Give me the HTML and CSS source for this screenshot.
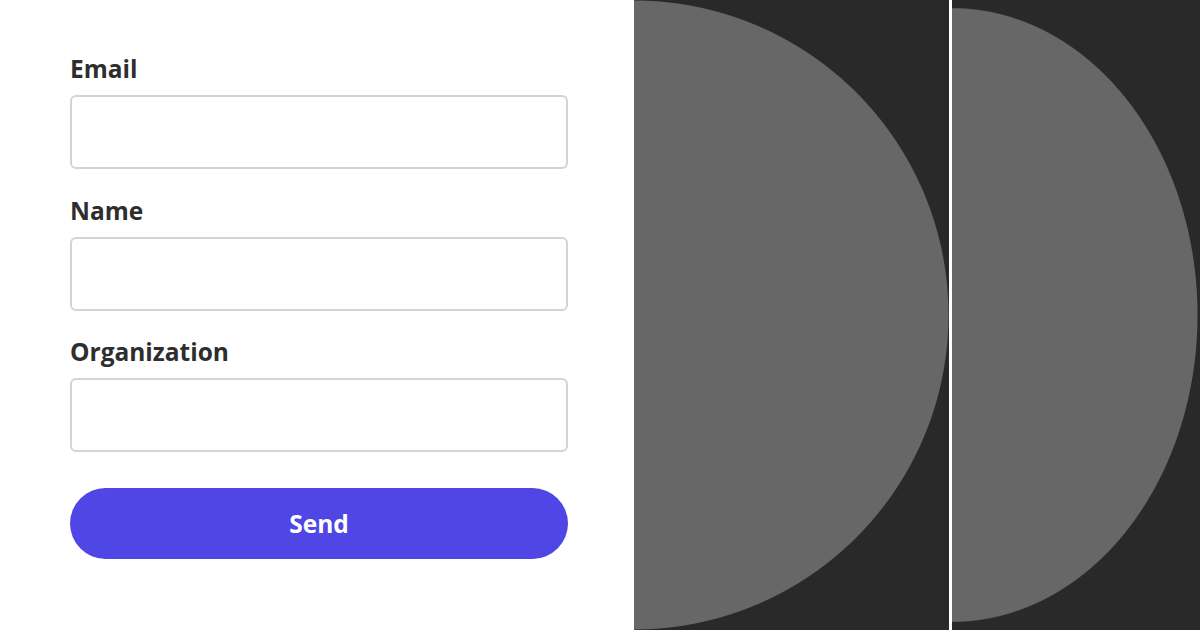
FILE: index.html
```html
<!DOCTYPE html>
<html lang="en">
<head>
<meta charset="utf-8">
<title>Contact form</title>
<link rel="stylesheet" href="styles.css">
</head>
<body>
<div class="page">
  <section class="form-side">
    <form class="form">
      <div class="field">
        <label class="label" for="email">Email</label>
        <input class="input" id="email" type="email">
      </div>
      <div class="field">
        <label class="label" for="name">Name</label>
        <input class="input" id="name" type="text">
      </div>
      <div class="field">
        <label class="label" for="org">Organization</label>
        <input class="input" id="org" type="text">
      </div>
      <button class="send" type="button">Send</button>
    </form>
  </section>
  <section class="art">
    <div class="panel panel-one"></div>
    <div class="panel panel-two"></div>
  </section>
</div>
</body>
</html>
```

FILE: styles.css
```css
* { box-sizing: border-box; }
html, body { margin: 0; padding: 0; }
body {
  width: 1200px;
  height: 630px;
  overflow: hidden;
  background: #ffffff;
  font-family: "Open Sans", "Noto Sans", "Liberation Sans", sans-serif;
}
.page {
  display: flex;
  width: 1200px;
  height: 630px;
}
.form-side {
  width: 634px;
  flex: none;
  padding: 53px 66px 0 70px;
}
.form {
  display: flex;
  flex-direction: column;
  gap: 25.5px;
  width: 498px;
}
.field {
  display: flex;
  flex-direction: column;
  gap: 10px;
}
.label {
  font-size: 24.5px;
  line-height: 32px;
  font-weight: 700;
  color: #2e2e2e;
}
.input {
  display: block;
  width: 498px;
  height: 74px;
  margin: 0;
  border: 2px solid #d4d4d4;
  border-radius: 6px;
  background: #ffffff;
  font: inherit;
}
.send {
  margin-top: 10px;
  width: 498px;
  height: 71px;
  border: none;
  border-radius: 36px;
  background: #4f46e5;
  color: #ffffff;
  font-family: inherit;
  font-size: 24.5px;
  font-weight: 700;
}
.art {
  flex: 1;
  display: flex;
  gap: 3px;
  background: #ffffff;
}
.panel {
  height: 630px;
  background-color: #292929;
}
.panel-one {
  width: 315px;
  flex: none;
  background-image: radial-gradient(315px 315px at 0 50%, #676767 calc(100% - 1px), #292929 100%);
}
.panel-two {
  flex: 1;
  background-image: radial-gradient(246px 307.5px at 0 50%, #676767 calc(100% - 1px), #292929 100%);
}
```
